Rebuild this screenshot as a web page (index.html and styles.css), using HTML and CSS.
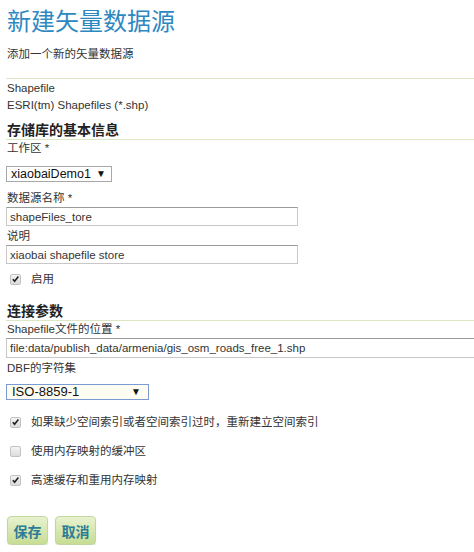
FILE: index.html
```html
<!DOCTYPE html>
<html lang="zh-CN">
<head>
<meta charset="utf-8">
<title>新建矢量数据源</title>
<link rel="stylesheet" href="styles.css">
</head>
<body>
<div class="page">
  <h1 class="title">新建矢量数据源</h1>
  <p class="subtitle">添加一个新的矢量数据源</p>

  <div class="source">
    <div class="line">Shapefile</div>
    <div class="line">ESRI(tm) Shapefiles (*.shp)</div>
  </div>

  <h2 class="section">存储库的基本信息</h2>
  <div class="label">工作区 *</div>
  <div class="select select-ws"><span>xiaobaiDemo1</span><span class="arrow">▼</span></div>

  <div class="label label-name">数据源名称 *</div>
  <div class="input input-short">shapeFiles_tore</div>
  <div class="label label-desc">说明</div>
  <div class="input input-short">xiaobai shapefile store</div>

  <div class="check check-enable">
    <span class="box checked"><svg viewBox="0 0 10 10" width="10" height="10"><path d="M2 5.2 L4 7.4 L8.2 2.2" fill="none" stroke="#222" stroke-width="1.8"/></svg></span>
    <span>启用</span>
  </div>

  <h2 class="section section-conn">连接参数</h2>
  <div class="label">Shapefile文件的位置 *</div>
  <div class="input input-long">file:data/publish_data/armenia/gis_osm_roads_free_1.shp</div>
  <div class="label label-dbf">DBF的字符集</div>
  <div class="select select-cs"><span>ISO-8859-1</span><span class="arrow">▼</span></div>

  <div class="check check-first">
    <span class="box checked"><svg viewBox="0 0 10 10" width="10" height="10"><path d="M2 5.2 L4 7.4 L8.2 2.2" fill="none" stroke="#222" stroke-width="1.8"/></svg></span>
    <span>如果缺少空间索引或者空间索引过时，重新建立空间索引</span>
  </div>
  <div class="check">
    <span class="box"></span>
    <span>使用内存映射的缓冲区</span>
  </div>
  <div class="check">
    <span class="box checked"><svg viewBox="0 0 10 10" width="10" height="10"><path d="M2 5.2 L4 7.4 L8.2 2.2" fill="none" stroke="#222" stroke-width="1.8"/></svg></span>
    <span>高速缓存和重用内存映射</span>
  </div>

  <div class="buttons">
    <button class="btn">保存</button>
    <button class="btn">取消</button>
  </div>
</div>
</body>
</html>
```
FILE: styles.css
```css
html, body {
  margin: 0;
  padding: 0;
  background: #fff;
  overflow: hidden;
}
body {
  font-family: "Liberation Sans", "Noto Sans CJK SC", sans-serif;
  font-size: 12px;
  color: #333;
}
.page {
  padding: 8px 0 0 6px;
  width: 468px;
}
.title {
  margin: 0;
  font-size: 24px;
  line-height: 28px;
  height: 28px;
  font-weight: normal;
  color: #2d88c2;
  padding-left: 1px;
}
.subtitle {
  margin: 10px 0 0 1px;
  line-height: 16px;
  font-size: 11.5px;
  color: #333;
}
.source {
  margin-top: 16px;
  border-top: 1px solid #dbe6c2;
  padding-top: 1px;
  padding-left: 1px;
}
.line {
  line-height: 17px;
  font-size: 11.5px;
}
.section {
  margin: 7px 0 0 0;
  font-size: 14px;
  line-height: 18px;
  font-weight: bold;
  color: #222;
  padding-left: 1px;
  border-bottom: 1px solid #dbe6c2;
}
.section-conn {
  margin-top: 15px;
}
.label {
  line-height: 16px;
  padding-left: 1px;
  font-size: 11.5px;
}
.label-name {
  margin-top: 8px;
}
.label-desc {
  margin-top: 2px;
}
.label-dbf {
  margin-top: 2px;
}
.select {
  margin-top: 10px;
  height: 16px;
  box-sizing: border-box;
  display: flex;
  align-items: center;
  justify-content: space-between;
  gap: 5px;
  padding: 0 5px 0 5px;
  font-size: 13px;
  line-height: 14px;
  color: #111;
  border: 1px solid #a8a8a8;
  background: #fff;
}
.select-ws {
  width: 106px;
  font-size: 12.5px;
  padding-left: 4px;
  padding-right: 6px;
}
.select-cs {
  margin-top: 8px;
  width: 143px;
  border-color: #7b9bd2;
  background: #fffdf2;
  padding-left: 5px;
  padding-right: 7px;
}
.arrow {
  font-size: 10px;
  color: #111;
}
.input {
  margin-top: 1px;
  box-sizing: border-box;
  border: 1px solid #c8c8c8;
  border-top-color: #9a9a9a;
  background: #fff;
  padding-left: 3px;
  font-size: 11.5px;
  color: #333;
  display: flex;
  align-items: center;
  white-space: nowrap;
}
.input-short {
  width: 292px;
  height: 19px;
}
.input-long {
  width: 480px;
  height: 20px;
}
.check {
  display: flex;
  align-items: center;
  margin-top: 13px;
  height: 16px;
  line-height: 16px;
  padding-left: 4px;
  font-size: 11.5px;
  color: #333;
}
.check-enable {
  margin-top: 7px;
}
.check-first {
  margin-top: 14px;
}
.box {
  width: 11px;
  height: 11px;
  box-sizing: border-box;
  border: 1px solid #c2c2c2;
  border-radius: 2px;
  background: linear-gradient(#f4f4f4, #dcdcdc);
  margin-right: 10px;
  display: flex;
  align-items: center;
  justify-content: center;
}
.box svg {
  display: block;
}
.buttons {
  margin-top: 28px;
  display: flex;
  gap: 7px;
  padding-left: 1px;
}
.btn {
  height: 29px;
  width: 41px;
  padding: 0;
  border: 1px solid #c2d7a0;
  border-radius: 4px;
  background: linear-gradient(#e8f2cf, #c6dd93);
  box-shadow: 0 1px 1px rgba(0, 0, 0, 0.12);
  color: #2c7c97;
  font-family: "Liberation Sans", "Noto Sans CJK SC", sans-serif;
  font-size: 14px;
  font-weight: bold;
  cursor: pointer;
}
```
